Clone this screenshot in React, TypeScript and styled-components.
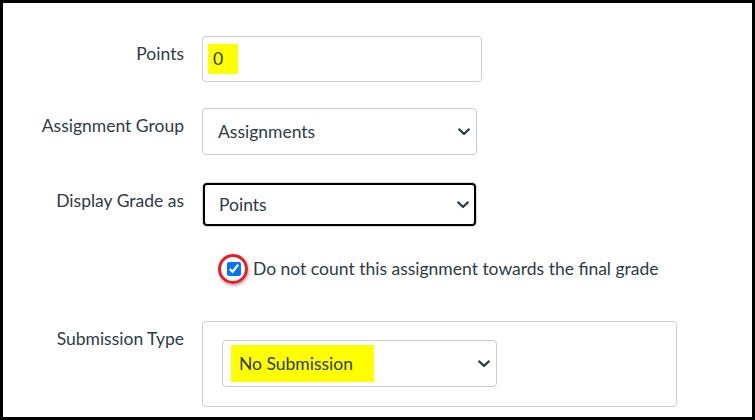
import React from "react";
import styled, { createGlobalStyle } from "styled-components";

const GlobalStyle = createGlobalStyle`
  html, body {
    margin: 0;
    padding: 0;
    background: #fff;
  }
  body {
    font-family: Lato, "Open Sans", "Liberation Sans", sans-serif;
    color: #2d3b45;
  }
`;

const Chevron = () => (
  <svg width="12" height="8" viewBox="0 0 12 8" fill="none">
    <path
      d="M1.2 1.4 L6 6 L10.8 1.4"
      stroke="#2d3b45"
      strokeWidth="2.2"
      strokeLinecap="round"
      strokeLinejoin="round"
    />
  </svg>
);

export default function App() {
  return (
    <>
      <GlobalStyle />
      <Frame>
        <Row $top={33}>
          <Label>Points</Label>
          <TextInput>
            <Highlight $padRight={15}>0</Highlight>
          </TextInput>
        </Row>

        <Row $top={26}>
          <Label>Assignment Group</Label>
          <Select $width={275}>
            <SelectText>Assignments</SelectText>
            <Chevron />
          </Select>
        </Row>

        <Row $top={28}>
          <Label>Display Grade as</Label>
          <FocusedSelect>
            <SelectText>Points</SelectText>
            <Chevron />
          </FocusedSelect>
        </Row>

        <CheckRow>
          <CheckWrap>
            <Check type="checkbox" defaultChecked />
            <RedRing />
          </CheckWrap>
          <CheckLabel>Do not count this assignment towards the final grade</CheckLabel>
        </CheckRow>

        <Row $top={37}>
          <Label>Submission Type</Label>
          <Panel>
            <Select $width={275} $padLeft={8}>
              <Highlight $padRight={21}>No Submission</Highlight>
              <Chevron />
            </Select>
          </Panel>
        </Row>
      </Frame>
    </>
  );
}

const Frame = styled.div`
  width: 755px;
  height: 420px;
  box-sizing: border-box;
  border: 3px solid #000;
  background: #fff;
  overflow: hidden;
  display: flex;
  flex-direction: column;
`;

const Row = styled.div<{ $top: number }>`
  display: flex;
  align-items: flex-start;
  gap: 18px;
  margin-top: ${(p) => p.$top}px;
`;

const Label = styled.div`
  width: 181px;
  flex: none;
  text-align: right;
  font-size: 17.5px;
  line-height: 22px;
  padding-top: 7px;
  color: #2d3b45;
  white-space: nowrap;
`;

const TextInput = styled.div`
  width: 280px;
  height: 46px;
  box-sizing: border-box;
  border: 1px solid #c7cdd1;
  border-radius: 4px;
  padding-left: 5px;
  display: flex;
  align-items: center;
  font-size: 17.5px;
`;

const Highlight = styled.span<{ $padRight: number }>`
  background: #ffff00;
  padding: 0 ${(p) => p.$padRight}px 0 5px;
  height: 30px;
  line-height: 30px;
  display: inline-block;
  color: #2d3b45;
`;

const Select = styled.div<{ $width: number; $padLeft?: number }>`
  width: ${(p) => p.$width}px;
  height: 47px;
  box-sizing: border-box;
  border: 1px solid #c7cdd1;
  border-radius: 4px;
  padding: 0 6px 0 ${(p) => p.$padLeft ?? 15}px;
  display: flex;
  align-items: center;
  justify-content: space-between;
  font-size: 17.5px;
  background: #fff;

  ${Highlight} {
    height: 37px;
    line-height: 37px;
    padding-left: 8px;
  }
`;

const FocusedSelect = styled.div`
  width: 273px;
  height: 43px;
  margin-left: 1px;
  box-sizing: border-box;
  border: 2px solid #000;
  border-radius: 4px;
  box-shadow: 0 0 0 1px #d6dadd;
  padding: 0 5px 0 14px;
  display: flex;
  align-items: center;
  justify-content: space-between;
  font-size: 17.5px;
`;

const SelectText = styled.span`
  color: #2d3b45;
  margin-top: -1px;
`;

const CheckRow = styled.div`
  display: flex;
  align-items: center;
  height: 30px;
  margin-top: 28px;
  padding-left: 224px;
`;

const CheckWrap = styled.div`
  position: relative;
  width: 14px;
  height: 14px;
  flex: none;
`;

const Check = styled.input`
  width: 14px;
  height: 14px;
  margin: 0;
  display: block;
  accent-color: #0075ff;
`;

const RedRing = styled.span`
  position: absolute;
  left: -9px;
  top: -8px;
  width: 24px;
  height: 24px;
  border: 3px solid #ed1c24;
  border-radius: 50%;
  box-shadow: 1px 2px 3px rgba(0, 0, 0, 0.3);
  pointer-events: none;
`;

const CheckLabel = styled.span`
  margin-left: 12px;
  font-size: 17.5px;
  line-height: 22px;
  color: #2d3b45;
  white-space: nowrap;
`;

const Panel = styled.div`
  width: 475px;
  height: 86px;
  box-sizing: border-box;
  border: 1px solid #c7cdd1;
  border-radius: 4px;
  padding: 18px 0 0 19px;
`;
